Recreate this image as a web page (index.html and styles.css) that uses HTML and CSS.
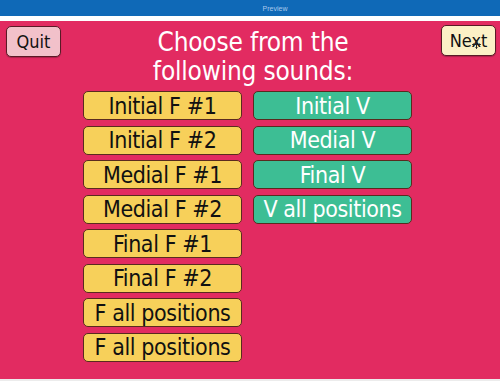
FILE: index.html
```html
<!DOCTYPE html>
<html>
<head>
<meta charset="utf-8">
<link rel="stylesheet" href="styles.css">
</head>
<body>
<div class="topbar"><span class="preview">Preview</span></div>
<div class="main">
  <div class="header">
    <button class="nav quit">Quit</button>
    <h1 class="title">Choose from the<br>following sounds:</h1>
    <button class="nav next">Next<svg class="cursor" width="9" height="9" viewBox="0 0 9 9"><path d="M4.5 0.5V8.5M0.5 4.5H8.5M3.5 1.5L4.5 0.5L5.5 1.5M3.5 7.5L4.5 8.5L5.5 7.5M1.5 3.5L0.5 4.5L1.5 5.5M7.5 3.5L8.5 4.5L7.5 5.5" stroke="#222" stroke-width="1" fill="none"/></svg></button>
  </div>
  <div class="grid">
    <div class="col">
      <div class="btn f">Initial F #1</div>
      <div class="btn f">Initial F #2</div>
      <div class="btn f">Medial F #1</div>
      <div class="btn f">Medial F #2</div>
      <div class="btn f">Final F #1</div>
      <div class="btn f">Final F #2</div>
      <div class="btn f">F all positions</div>
      <div class="btn f">F all positions</div>
    </div>
    <div class="col">
      <div class="btn v">Initial V</div>
      <div class="btn v">Medial V</div>
      <div class="btn v">Final V</div>
      <div class="btn v">V all positions</div>
    </div>
  </div>
</div>
<div class="bottom"></div>
</body>
</html>
```
FILE: styles.css
```css
html, body {
  margin: 0;
  padding: 0;
  width: 500px;
  height: 381px;
  overflow: hidden;
  background: #ffffff;
  font-family: "DejaVu Sans", "Liberation Sans", sans-serif;
}
.topbar {
  height: 16px;
  background: #0f69b7;
  display: flex;
  justify-content: center;
  align-items: center;
}
.preview {
  color: #a9c8ec;
  font-family: "Liberation Sans", sans-serif;
  font-size: 7px;
  margin-left: 50px;
}
.main {
  margin-top: 5px;
  height: 358px;
  background: #e22b61;
  padding: 4px 4px 0 6px;
  box-sizing: border-box;
}
.bottom {
  height: 2px;
  background: #ececec;
}
.header {
  display: flex;
  align-items: flex-start;
  height: 66px;
}
.nav {
  height: 31px;
  border: 1.5px solid #5a1a26;
  border-radius: 5px;
  font-family: "DejaVu Sans", sans-serif;
  font-stretch: condensed;
  font-size: 18px;
  color: #111;
  padding: 0;
  margin-top: 1px;
  box-shadow: 0 1px 1px rgba(0,0,0,0.25);
}
.quit {
  width: 55px;
  background: #f2c1ca;
}
.next {
  width: 55px;
  margin-top: 0;
  background: #fcf0c6;
  position: relative;
}
.cursor {
  position: absolute;
  left: 30px;
  top: 14px;
}
.title {
  flex: 1;
  margin: 3px 0 0 4px;
  text-align: center;
  color: #ffffff;
  font-weight: normal;
  font-size: 26px;
  line-height: 29px;
  font-stretch: condensed;
  letter-spacing: -0.2px;
}
.grid {
  display: flex;
  gap: 11px;
  margin-left: 77px;
}
.col {
  display: flex;
  flex-direction: column;
  gap: 5.5px;
  width: 159px;
}
.btn {
  height: 29px;
  box-sizing: border-box;
  border: 1.5px solid #5a2a1e;
  border-radius: 5px;
  display: flex;
  align-items: center;
  justify-content: center;
  font-size: 23px;
  font-stretch: condensed;
  letter-spacing: -0.4px;
  white-space: nowrap;
  overflow: hidden;
}
.f {
  background: #f7d05a;
  color: #111;
}
.v {
  background: #3dbe94;
  color: #ffffff;
}
```
